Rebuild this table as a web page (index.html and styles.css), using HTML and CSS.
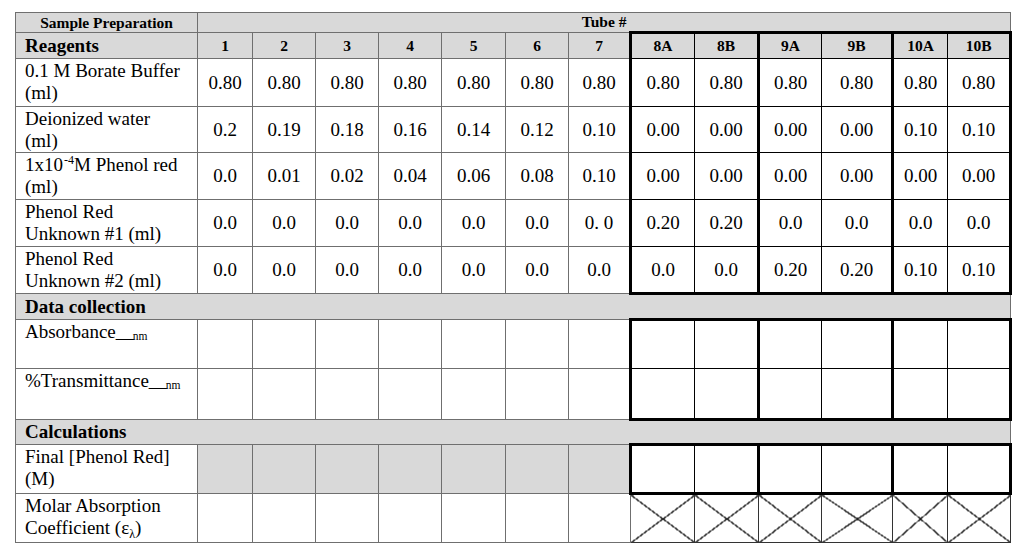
FILE: index.html
```html
<!DOCTYPE html>
<html>
<head>
<meta charset="utf-8">
<link rel="stylesheet" href="styles.css">
</head>
<body>
<table class="prep">
  <colgroup>
    <col class="c-label">
    <col class="c55"><col class="c63"><col class="c63"><col class="c63"><col class="c64"><col class="c63"><col class="c62">
    <col class="c64"><col class="c64"><col class="c63"><col class="c71"><col class="c55"><col class="c63">
  </colgroup>
  <tr class="r-top shade">
    <th class="small">Sample Preparation</th>
    <th class="small" colspan="13">Tube #</th>
  </tr>
  <tr class="r-head shade grp grp-top">
    <th class="big left">Reagents</th>
    <th>1</th><th>2</th><th>3</th><th>4</th><th>5</th><th>6</th><th>7</th>
    <th>8A</th><th>8B</th><th>9A</th><th>9B</th><th>10A</th><th>10B</th>
  </tr>
  <tr class="r48 grp">
    <td class="label">0.1 M Borate Buffer (ml)</td>
    <td>0.80</td><td>0.80</td><td>0.80</td><td>0.80</td><td>0.80</td><td>0.80</td><td>0.80</td>
    <td>0.80</td><td>0.80</td><td>0.80</td><td>0.80</td><td>0.80</td><td>0.80</td>
  </tr>
  <tr class="r46 grp">
    <td class="label">Deionized water (ml)</td>
    <td>0.2</td><td>0.19</td><td>0.18</td><td>0.16</td><td>0.14</td><td>0.12</td><td>0.10</td>
    <td>0.00</td><td>0.00</td><td>0.00</td><td>0.00</td><td>0.10</td><td>0.10</td>
  </tr>
  <tr class="r47 grp">
    <td class="label">1x10<sup>-4</sup>M Phenol red (ml)</td>
    <td>0.0</td><td>0.01</td><td>0.02</td><td>0.04</td><td>0.06</td><td>0.08</td><td>0.10</td>
    <td>0.00</td><td>0.00</td><td>0.00</td><td>0.00</td><td>0.00</td><td>0.00</td>
  </tr>
  <tr class="r47 grp">
    <td class="label">Phenol Red Unknown #1 (ml)</td>
    <td>0.0</td><td>0.0</td><td>0.0</td><td>0.0</td><td>0.0</td><td>0.0</td><td>0. 0</td>
    <td>0.20</td><td>0.20</td><td>0.0</td><td>0.0</td><td>0.0</td><td>0.0</td>
  </tr>
  <tr class="r47 grp grp-bot">
    <td class="label">Phenol Red Unknown #2 (ml)</td>
    <td>0.0</td><td>0.0</td><td>0.0</td><td>0.0</td><td>0.0</td><td>0.0</td><td>0.0</td>
    <td>0.0</td><td>0.0</td><td>0.20</td><td>0.20</td><td>0.10</td><td>0.10</td>
  </tr>
  <tr class="r-sec shade">
    <th class="big left" colspan="14">Data collection</th>
  </tr>
  <tr class="r49 grp grp-top">
    <td class="label">Absorbance<span class="us">__</span><sub>nm</sub></td>
    <td></td><td></td><td></td><td></td><td></td><td></td><td></td>
    <td></td><td></td><td></td><td></td><td></td><td></td>
  </tr>
  <tr class="r51 grp grp-bot">
    <td class="label">%Transmittance<span class="us">__</span><sub>nm</sub></td>
    <td></td><td></td><td></td><td></td><td></td><td></td><td></td>
    <td></td><td></td><td></td><td></td><td></td><td></td>
  </tr>
  <tr class="r-sec2 shade">
    <th class="big left" colspan="14">Calculations</th>
  </tr>
  <tr class="r49 grp grp-top grp-bot final">
    <td class="label">Final [Phenol Red] (M)</td>
    <td></td><td></td><td></td><td></td><td></td><td></td><td></td>
    <td></td><td></td><td></td><td></td><td></td><td></td>
  </tr>
  <tr class="r49 crossed">
    <td class="label">Molar Absorption Coefficient (ε<sub class="lam">λ</sub>)</td>
    <td></td><td></td><td></td><td></td><td></td><td></td><td></td>
    <td></td><td></td><td></td><td></td><td></td><td></td>
  </tr>
</table>
</body>
</html>
```

FILE: styles.css
```css
html, body {
  margin: 0;
  padding: 0;
  background: #fff;
}

body {
  padding: 12px 0 0 15px;
  font-family: "Liberation Serif", "Times New Roman", serif;
  color: #000;
}

.prep {
  border-collapse: collapse;
  table-layout: fixed;
  width: 995px;
  font-size: 19px;
  line-height: 22px;
}

.c-label { width: 182px; }
.c55 { width: 55px; }
.c62 { width: 62px; }
.c63 { width: 63px; }
.c64 { width: 64px; }
.c71 { width: 71px; }

.prep th,
.prep td {
  border: 1px solid #6f6f6f;
  padding: 0;
  text-align: center;
  vertical-align: middle;
  white-space: nowrap;
}

.prep th {
  font-weight: bold;
  font-size: 15.5px;
  line-height: 18px;
}

.prep th.big {
  font-size: 19px;
  line-height: 22px;
}

.prep th.left {
  text-align: left;
  padding-left: 9px;
}

.shade th,
.shade td {
  background: #d9d9d9;
}

.prep td.label {
  text-align: left;
  vertical-align: top;
  white-space: normal;
  padding: 1px 15px 0 9px;
}

.r-top { height: 19px; }
.r-head { height: 26px; }
.r46 { height: 46px; }
.r47 { height: 47px; }
.r48 { height: 48px; }
.r49 { height: 49px; }
.r51 { height: 51px; }
.r-sec { height: 26px; }
.r-sec2 { height: 24px; }

sup {
  font-size: 12px;
  line-height: 0;
  vertical-align: 7px;
  margin-left: 1px;
}

sub {
  font-size: 11.5px;
  line-height: 0;
  vertical-align: -2px;
}

sub.lam {
  font-size: 12px;
  vertical-align: -4px;
}

.us {
  letter-spacing: -1px;
}

/* grouped tube columns (8A..10B) */
.grp > :nth-child(n+9) {
  border-color: #000;
}

.grp > :nth-child(9),
.grp > :nth-child(11),
.grp > :nth-child(13) {
  border-left: 3px solid #000;
}

.grp > :nth-child(14) {
  border-right: 3px solid #000;
}

.grp-top > :nth-child(n+9) {
  border-top: 3px solid #000;
}

.grp-bot > :nth-child(n+9) {
  border-bottom: 3px solid #000;
}

.final > :nth-child(n+2):nth-child(-n+8) {
  background: #d9d9d9;
}

.crossed > :nth-child(n+9) {
  border-color: #333;
  background:
    linear-gradient(to top right, transparent calc(50% - 0.6px), #111 calc(50% - 0.6px), #111 calc(50% + 0.6px), transparent calc(50% + 0.6px)),
    linear-gradient(to bottom right, transparent calc(50% - 0.6px), #111 calc(50% - 0.6px), #111 calc(50% + 0.6px), transparent calc(50% + 0.6px));
}
```
